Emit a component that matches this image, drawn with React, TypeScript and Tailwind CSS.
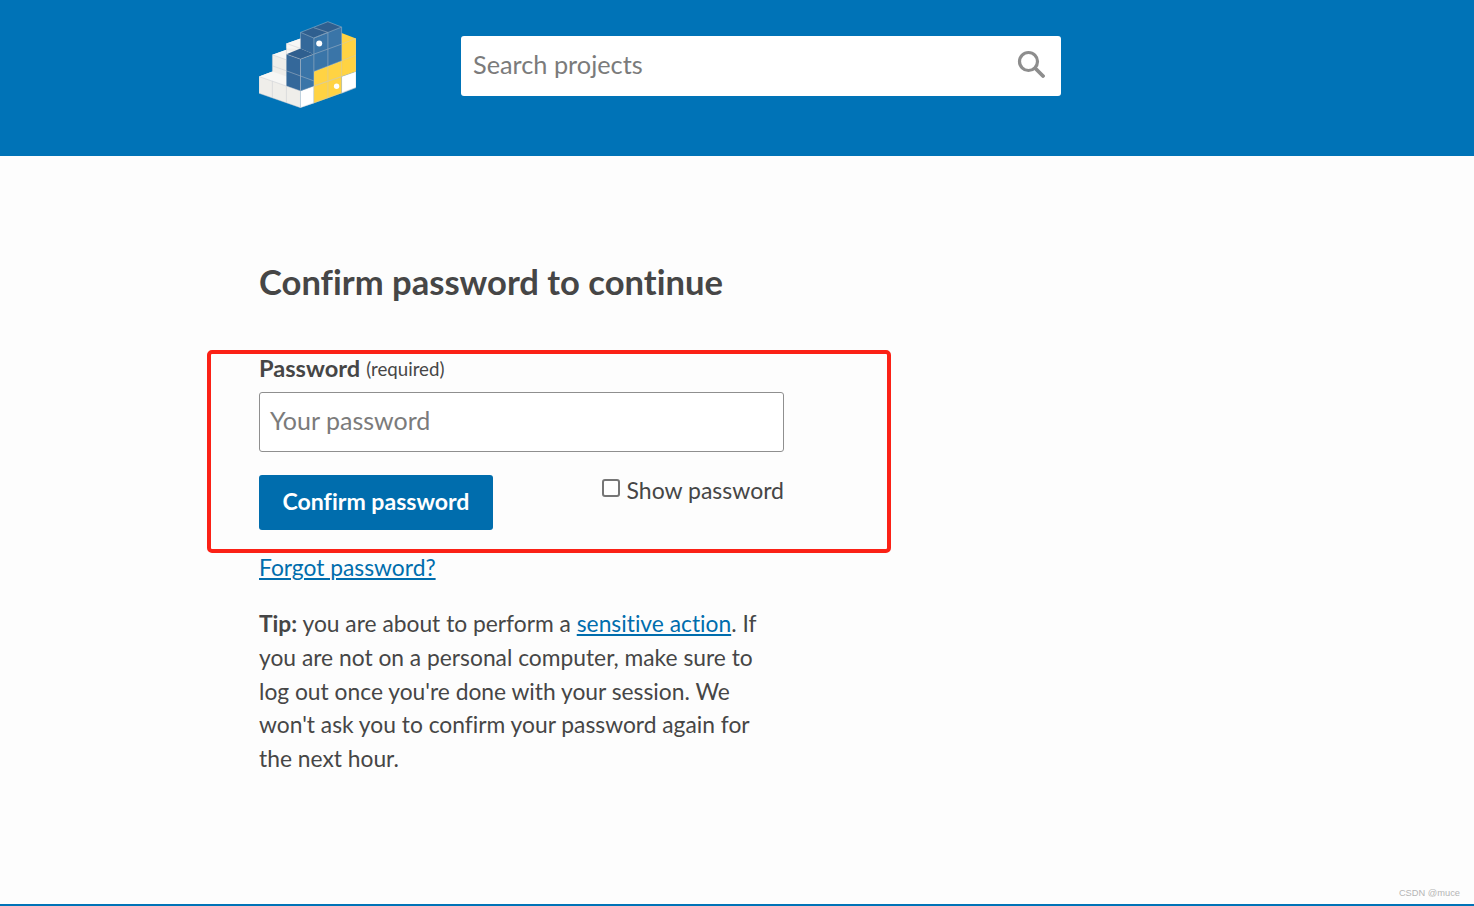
import React from 'react'

const PypiLogo = () => (
  <svg viewBox="58 46 290 260" className="h-[87px] w-[97px]">
    {/* white stairs */}
    <polygon points="58,212 98,197 98,147 140,132 140,113 182,98 222,150 182,255 182,305 58,262" fill="#efeeea" />
    <polygon points="58,212 98,197 140,212 182,196 182,255" fill="#f7f7f5" />
    <polygon points="98,147 140,132 182,146 140,162" fill="#f7f7f5" />
    <polygon points="140,113 182,98 182,128 140,128" fill="#f7f7f5" />
    <polygon points="182,255 222,240 222,292 182,305" fill="#ffffff" />
    <polygon points="305,212 348,197 348,245 305,262" fill="#ffffff" />
    {/* yellow */}
    <polygon points="222,197 305,165 305,82 348,98 348,197 305,212 305,262 222,292" fill="#ffd343" />
    {/* blue */}
    <polygon points="182,80 222,97 222,145 182,128" fill="#34689a" />
    <polygon points="222,97 305,64 305,165 222,197 222,240 182,255 182,160 222,145" fill="#3a75a8" />
    <polygon points="182,80 264,48 305,64 222,97" fill="#2f5f8f" />
    <polygon points="140,145 182,160 182,255 140,240" fill="#34689a" />
    <polygon points="140,145 182,128 222,145 182,160" fill="#2f5f8f" />
    {/* grid lines */}
    <g stroke="#c4c9cf" strokeWidth="2.2" fill="none" opacity="0.6">
      <path d="M58 212L182 255M58 262L182 305M58 212V262M98 225V276M140 240V290M182 255V305" />
      <path d="M98 147V197M98 147L140 162M98 180L140 195M140 113V145M140 113L182 128" />
      <path d="M222 66L264 80L222 97M264 80V180M222 97V292M305 64V262M182 160V255M140 195L222 225" />
      <path d="M222 145L305 115L348 98M222 197L305 165L348 148M222 240L305 212L348 197M264 180V277M182 255L305 212M305 262L348 245M140 145L182 160L222 145" />
      <path d="M182 80L264 48L305 64L222 97L182 80M182 80V128M348 98V245M182 305L348 245" />
    </g>
    <circle cx="238" cy="113" r="9" fill="#ffffff" />
    <circle cx="290" cy="241" r="8" fill="#ffffff" />
  </svg>
)

const SearchIcon = () => (
  <svg viewBox="0 0 28 28" className="mb-[5px] h-7 w-7" fill="none" stroke="#8d8d8d" strokeLinecap="round">
    <circle cx="11.5" cy="11.5" r="9" strokeWidth="3.2" />
    <path d="M18.5 18.5L26 26" strokeWidth="3.8" />
  </svg>
)

export default function App() {
  return (
    <div className="relative h-[906px] w-[1474px] overflow-hidden bg-[#fdfdfd] font-['Lato','Noto_Sans',sans-serif] text-[#464646] [font-variant-ligatures:none]">
      <header className="h-[156px] bg-[#0073b7] pl-[259px] pt-[21px]">
        <div className="flex items-start">
          <PypiLogo />
          <div className="ml-[105px] mt-[15px] flex h-[60px] w-[600px] items-center justify-between rounded-[3px] bg-white pl-3 pr-4">
            <span className="mb-[2px] text-[25.3px] text-[#7b7b7b]">Search projects</span>
            <SearchIcon />
          </div>
        </div>
      </header>

      <main className="ml-[259px] w-[525px]">
        <h1 className="mt-[104px] text-[34.6px] leading-[44px] font-bold text-[#464646]">Confirm password to continue</h1>

        <div className="mt-[48px] text-[23.6px] leading-[30px]">
          <span className="relative top-px font-bold">Password</span> <span className="relative text-[18.7px]">(required)</span>
        </div>
        <div className="mt-[8px] flex h-[60px] items-center rounded-[3px] border border-[#8f8f8f] bg-white pl-[10px] text-[25px] text-[#7b7b7b]">
          <span className="relative -top-px">Your password</span>
        </div>

        <div className="mt-[23px] flex items-start justify-between">
          <button className="h-[55px] w-[234px] rounded-[3px] bg-[#006dad] text-[23.1px] font-bold text-white">
            <span className="relative -top-px">Confirm password</span>
          </button>
          <label className="-mt-[1px] flex items-start gap-[7px] text-[23px] leading-[32px]">
            <span className="mt-[5px] h-[18px] w-[18px] rounded-[3px] border-2 border-[#767676] bg-white" />
            Show password
          </label>
        </div>

        <a className="mt-[21px] block text-[22.8px] leading-[32px] text-[#006dad] underline underline-offset-2">Forgot password?</a>

        <p className="mt-[24px] text-[22.8px] leading-[33.8px]">
          <strong className="font-bold">Tip:</strong> you are about to perform a{' '}
          <a className="text-[#006dad] underline underline-offset-2">sensitive action</a>. If
          <br />
          you are not on a personal computer, make sure to
          <br />
          log out once you're done with your session. We
          <br />
          won't ask you to confirm your password again for
          <br />
          the next hour.
        </p>
      </main>

      {/* red annotation box */}
      <div className="absolute left-[207px] top-[350px] h-[203px] w-[684px] rounded-[5px] border-[4px] border-[#fb2116]" />

      {/* watermark */}
      <span className="absolute right-[14px] top-[887px] font-['Liberation_Sans',sans-serif] text-[9.3px] leading-[12px] text-[#b5b5b5]">CSDN @muce</span>
      <div className="absolute bottom-0 left-0 h-[2px] w-full bg-[#0073b7]" />
    </div>
  )
}
